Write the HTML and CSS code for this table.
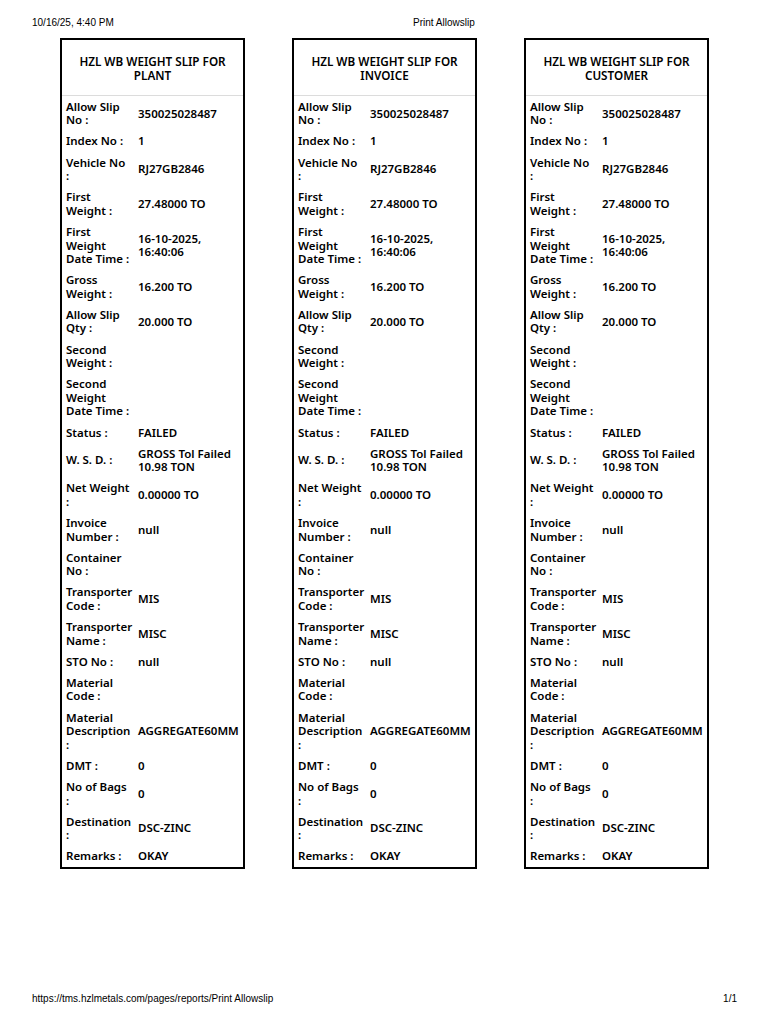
FILE: index.html
```html
<!DOCTYPE html>
<html>
<head>
<meta charset="utf-8">
<title>Print Allowslip</title>
<link rel="stylesheet" href="styles.css">
</head>
<body>
<div class="page">
  <header class="print-head">
    <span class="ph-date">10/16/25, 4:40 PM</span>
    <span class="ph-title">Print Allowslip</span>
  </header>
  <main class="slips">
    <section class="slip">
      <h2 class="slip-title">HZL WB WEIGHT SLIP FOR PLANT</h2>
      <div class="rows">
        <div class="lbl">Allow Slip<br>No :</div><div class="val">350025028487</div>
        <div class="lbl">Index No :</div><div class="val">1</div>
        <div class="lbl">Vehicle No<br>:</div><div class="val">RJ27GB2846</div>
        <div class="lbl">First<br>Weight :</div><div class="val">27.48000 TO</div>
        <div class="lbl">First<br>Weight<br>Date Time :</div><div class="val">16-10-2025,<br>16:40:06</div>
        <div class="lbl">Gross<br>Weight :</div><div class="val">16.200 TO</div>
        <div class="lbl">Allow Slip<br>Qty :</div><div class="val">20.000 TO</div>
        <div class="lbl">Second<br>Weight :</div><div class="val"></div>
        <div class="lbl">Second<br>Weight<br>Date Time :</div><div class="val"></div>
        <div class="lbl">Status :</div><div class="val">FAILED</div>
        <div class="lbl">W. S. D. :</div><div class="val">GROSS Tol Failed<br>10.98 TON</div>
        <div class="lbl">Net Weight<br>:</div><div class="val">0.00000 TO</div>
        <div class="lbl">Invoice<br>Number :</div><div class="val">null</div>
        <div class="lbl">Container<br>No :</div><div class="val"></div>
        <div class="lbl">Transporter<br>Code :</div><div class="val">MIS</div>
        <div class="lbl">Transporter<br>Name :</div><div class="val">MISC</div>
        <div class="lbl">STO No :</div><div class="val">null</div>
        <div class="lbl">Material<br>Code :</div><div class="val"></div>
        <div class="lbl">Material<br>Description<br>:</div><div class="val">AGGREGATE60MM</div>
        <div class="lbl">DMT :</div><div class="val">0</div>
        <div class="lbl">No of Bags<br>:</div><div class="val">0</div>
        <div class="lbl">Destination<br>:</div><div class="val">DSC-ZINC</div>
        <div class="lbl">Remarks :</div><div class="val">OKAY</div>
      </div>
    </section>
    <section class="slip">
      <h2 class="slip-title">HZL WB WEIGHT SLIP FOR INVOICE</h2>
      <div class="rows">
        <div class="lbl">Allow Slip<br>No :</div><div class="val">350025028487</div>
        <div class="lbl">Index No :</div><div class="val">1</div>
        <div class="lbl">Vehicle No<br>:</div><div class="val">RJ27GB2846</div>
        <div class="lbl">First<br>Weight :</div><div class="val">27.48000 TO</div>
        <div class="lbl">First<br>Weight<br>Date Time :</div><div class="val">16-10-2025,<br>16:40:06</div>
        <div class="lbl">Gross<br>Weight :</div><div class="val">16.200 TO</div>
        <div class="lbl">Allow Slip<br>Qty :</div><div class="val">20.000 TO</div>
        <div class="lbl">Second<br>Weight :</div><div class="val"></div>
        <div class="lbl">Second<br>Weight<br>Date Time :</div><div class="val"></div>
        <div class="lbl">Status :</div><div class="val">FAILED</div>
        <div class="lbl">W. S. D. :</div><div class="val">GROSS Tol Failed<br>10.98 TON</div>
        <div class="lbl">Net Weight<br>:</div><div class="val">0.00000 TO</div>
        <div class="lbl">Invoice<br>Number :</div><div class="val">null</div>
        <div class="lbl">Container<br>No :</div><div class="val"></div>
        <div class="lbl">Transporter<br>Code :</div><div class="val">MIS</div>
        <div class="lbl">Transporter<br>Name :</div><div class="val">MISC</div>
        <div class="lbl">STO No :</div><div class="val">null</div>
        <div class="lbl">Material<br>Code :</div><div class="val"></div>
        <div class="lbl">Material<br>Description<br>:</div><div class="val">AGGREGATE60MM</div>
        <div class="lbl">DMT :</div><div class="val">0</div>
        <div class="lbl">No of Bags<br>:</div><div class="val">0</div>
        <div class="lbl">Destination<br>:</div><div class="val">DSC-ZINC</div>
        <div class="lbl">Remarks :</div><div class="val">OKAY</div>
      </div>
    </section>
    <section class="slip">
      <h2 class="slip-title">HZL WB WEIGHT SLIP FOR CUSTOMER</h2>
      <div class="rows">
        <div class="lbl">Allow Slip<br>No :</div><div class="val">350025028487</div>
        <div class="lbl">Index No :</div><div class="val">1</div>
        <div class="lbl">Vehicle No<br>:</div><div class="val">RJ27GB2846</div>
        <div class="lbl">First<br>Weight :</div><div class="val">27.48000 TO</div>
        <div class="lbl">First<br>Weight<br>Date Time :</div><div class="val">16-10-2025,<br>16:40:06</div>
        <div class="lbl">Gross<br>Weight :</div><div class="val">16.200 TO</div>
        <div class="lbl">Allow Slip<br>Qty :</div><div class="val">20.000 TO</div>
        <div class="lbl">Second<br>Weight :</div><div class="val"></div>
        <div class="lbl">Second<br>Weight<br>Date Time :</div><div class="val"></div>
        <div class="lbl">Status :</div><div class="val">FAILED</div>
        <div class="lbl">W. S. D. :</div><div class="val">GROSS Tol Failed<br>10.98 TON</div>
        <div class="lbl">Net Weight<br>:</div><div class="val">0.00000 TO</div>
        <div class="lbl">Invoice<br>Number :</div><div class="val">null</div>
        <div class="lbl">Container<br>No :</div><div class="val"></div>
        <div class="lbl">Transporter<br>Code :</div><div class="val">MIS</div>
        <div class="lbl">Transporter<br>Name :</div><div class="val">MISC</div>
        <div class="lbl">STO No :</div><div class="val">null</div>
        <div class="lbl">Material<br>Code :</div><div class="val"></div>
        <div class="lbl">Material<br>Description<br>:</div><div class="val">AGGREGATE60MM</div>
        <div class="lbl">DMT :</div><div class="val">0</div>
        <div class="lbl">No of Bags<br>:</div><div class="val">0</div>
        <div class="lbl">Destination<br>:</div><div class="val">DSC-ZINC</div>
        <div class="lbl">Remarks :</div><div class="val">OKAY</div>
      </div>
    </section>
  </main>
  <footer class="print-foot">
    <span class="pf-url">https://tms.hzlmetals.com/pages/reports/Print Allowslip</span>
    <span class="pf-page">1/1</span>
  </footer>
</div>
</body>
</html>
```

FILE: styles.css
```css
html, body {
  margin: 0;
  padding: 0;
  background: #fff;
}

.page {
  min-height: 1024px;
  display: flex;
  flex-direction: column;
  color: #000;
}

.print-head {
  display: flex;
  padding: 17px 0 0 32px;
  height: 21px;
  font-family: "Liberation Sans", Arial, sans-serif;
  font-size: 10px;
  line-height: 12px;
}

.ph-date {
  width: 381px;
}

.print-foot {
  margin-top: auto;
  display: flex;
  justify-content: space-between;
  padding: 0 31px 19px 32px;
  font-family: "Liberation Sans", Arial, sans-serif;
  font-size: 10px;
  line-height: 12px;
}

.slips {
  display: flex;
  gap: 47px;
  padding-left: 60px;
  align-items: flex-start;
}

.slip {
  width: 185px;
  box-sizing: border-box;
  border: 2px solid #000;
  font-family: "Noto Sans", sans-serif;
  font-weight: 600;
  font-size: 11.5px;
  line-height: 13.6px;
}

.slip-title {
  margin: 0;
  padding: 14px 12px 13px;
  text-align: center;
  font-size: 11.7px;
  font-weight: 600;
  line-height: 14px;
  border-bottom: 1px solid #dcdcdc;
}

.rows {
  display: grid;
  grid-template-columns: 66px 1fr;
  column-gap: 6px;
  padding: 0 2px 0 4px;
  align-items: center;
}

.lbl {
  padding: 3.75px 0;
  white-space: nowrap;
}

.val {
  padding: 3.75px 0;
  white-space: nowrap;
}
```
